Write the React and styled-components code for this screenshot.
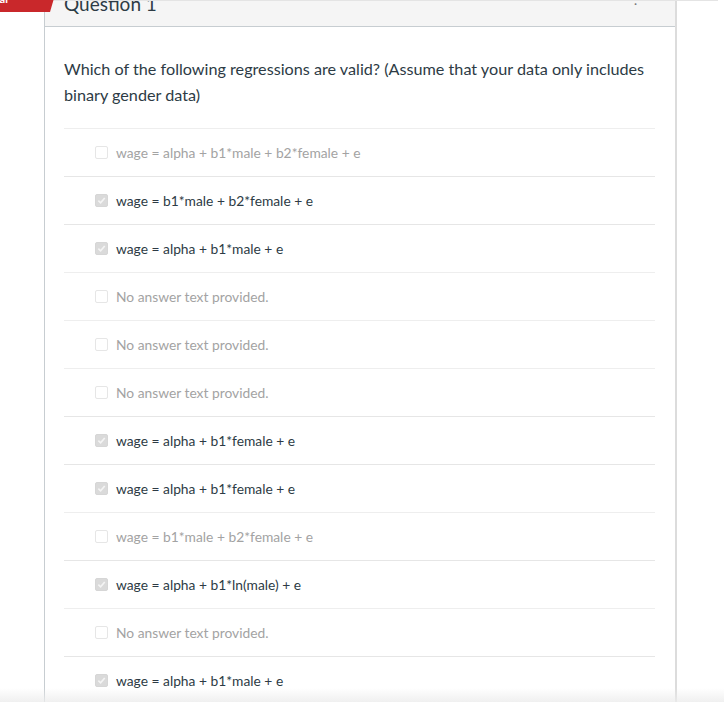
import React from "react";
import styled, { createGlobalStyle } from "styled-components";

const GlobalStyle = createGlobalStyle`
  html, body {
    margin: 0;
    padding: 0;
    background: #ffffff;
    font-family: Lato, "Open Sans", "Liberation Sans", sans-serif;
    color: #2d3b45;
  }
  #root { overflow: hidden; height: 702px; }
`;

const answers = [
  { text: "wage = alpha + b1*male + b2*female + e", checked: false },
  { text: "wage = b1*male + b2*female + e", checked: true },
  { text: "wage = alpha + b1*male + e", checked: true },
  { text: "No answer text provided.", checked: false },
  { text: "No answer text provided.", checked: false },
  { text: "No answer text provided.", checked: false },
  { text: "wage = alpha + b1*female + e", checked: true },
  { text: "wage = alpha + b1*female + e", checked: true },
  { text: "wage = b1*male + b2*female + e", checked: false },
  { text: "wage = alpha + b1*ln(male) + e", checked: true },
  { text: "No answer text provided.", checked: false },
  { text: "wage = alpha + b1*male + e", checked: true },
];

const Page = styled.div`
  position: relative;
  height: 702px;
  overflow: hidden;
`;

const TopLine = styled.div`
  position: absolute;
  top: 0;
  left: 0;
  width: 718px;
  height: 1px;
  background: #e4e4e4;
  z-index: 2;
`;

const Banner = styled.div`
  position: absolute;
  top: -12px;
  left: 0;
  width: 57px;
  height: 24px;
  background: #c9282b;
  clip-path: polygon(0 0, 100% 0, calc(100% - 7px) 100%, 0 100%);
  overflow: hidden;
  z-index: 3;
`;

const BannerText = styled.span`
  position: absolute;
  left: -24px;
  bottom: 7px;
  font-size: 11px;
  font-weight: 700;
  color: #ffffff;
  white-space: nowrap;
`;

const Card = styled.div`
  margin: -20px 0 0 44px;
  width: 633px;
  box-sizing: border-box;
  border-left: 1px solid #c7cdd1;
  border-right: 2px solid #dcdcdc;
  background: #ffffff;
  min-height: 760px;
`;

const Header = styled.div`
  box-sizing: border-box;
  height: 47px;
  padding: 12px 20px 0 19px;
  background: #f5f5f5;
  border-bottom: 1px solid #c7cdd1;
  display: flex;
  justify-content: space-between;
`;

const Title = styled.h2`
  margin: 0;
  font-size: 19px;
  line-height: 23px;
  font-weight: 400;
  color: #2d3b45;
`;

const Points = styled.span`
  font-size: 12px;
  line-height: 23px;
  color: #777;
  margin-right: 18px;
`;

const Body = styled.div`
  padding: 29px 20px 0 19px;
`;

const Question = styled.p`
  margin: 0 0 20px;
  font-size: 16.2px;
  line-height: 26px;
  color: #2d3b45;
`;

const Row = styled.div`
  box-sizing: border-box;
  height: 48px;
  border-top: 1px solid ${(p) => (p.checked ? "#e6e6e6" : "#eeeeee")};
  display: flex;
  align-items: center;
  gap: 8px;
  padding-left: 31px;
`;

const Box = styled.span`
  width: 13px;
  height: 13px;
  box-sizing: border-box;
  border-radius: 2px;
  border: 1px solid ${(p) => (p.checked ? "#d6d6d6" : "#e6e6e6")};
  background: ${(p) => (p.checked ? "#dadada" : "#ffffff")};
  display: flex;
  align-items: center;
  justify-content: center;
`;

const Label = styled.span`
  font-size: 13.8px;
  color: ${(p) => (p.checked ? "#2d3b45" : "#a3a3a3")};
`;

const BottomFade = styled.div`
  position: absolute;
  left: 0;
  right: 0;
  bottom: 0;
  height: 14px;
  background: linear-gradient(rgba(240, 240, 240, 0), rgba(236, 236, 236, 0.8));
  pointer-events: none;
`;

const Check = () => (
  <svg width="9" height="9" viewBox="0 0 10 10">
    <path d="M1.5 5.2 L4 7.6 L8.6 2.2" fill="none" stroke="#f4f4f4" strokeWidth="1.8" />
  </svg>
);

export default function App() {
  return (
    <Page>
      <GlobalStyle />
      <TopLine />
      <Banner>
        <BannerText>Similar</BannerText>
      </Banner>
      <Card>
        <Header>
          <Title>Question 1</Title>
          <Points>·</Points>
        </Header>
        <Body>
          <Question>
            Which of the following regressions are valid? (Assume that your data
            only includes binary gender data)
          </Question>
          {answers.map((a, i) => (
            <Row key={i} checked={a.checked}>
              <Box checked={a.checked}>{a.checked && <Check />}</Box>
              <Label checked={a.checked}>{a.text}</Label>
            </Row>
          ))}
        </Body>
      </Card>
      <BottomFade />
    </Page>
  );
}
